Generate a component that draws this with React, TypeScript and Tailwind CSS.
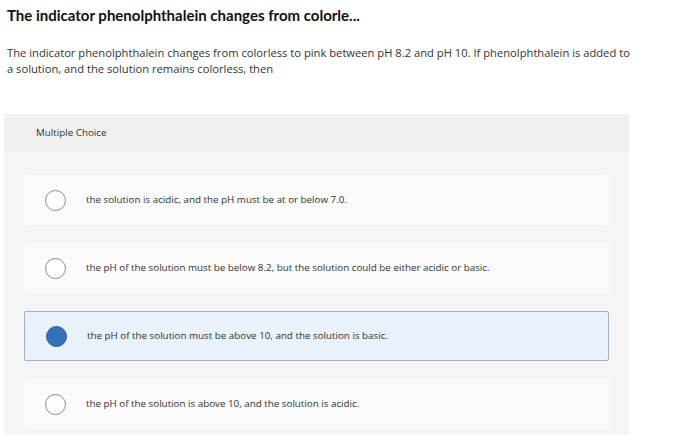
import React from 'react';

const options = [
  { text: 'the solution is acidic, and the pH must be at or below 7.0.', selected: false },
  { text: 'the pH of the solution must be below 8.2, but the solution could be either acidic or basic.', selected: false },
  { text: 'the pH of the solution must be above 10, and the solution is basic.', selected: true },
  { text: 'the pH of the solution is above 10, and the solution is acidic.', selected: false },
];

function Option({ text, selected }: { text: string; selected: boolean }) {
  return (
    <div
      className={`flex h-[50px] items-center rounded-[2px] ${
        selected ? 'border border-[#9fb0c4] bg-[#e9f1fa]' : 'bg-[#fafafa]'
      }`}
    >
      <div className="flex w-[62px] shrink-0 justify-center">
        {selected ? (
          <span className="h-[21px] w-[21px] rounded-full border border-[#2a5f9e] bg-[#3572bb]" />
        ) : (
          <span className="h-[21px] w-[21px] rounded-full border-[1.5px] border-[#7e8a9b] bg-white" />
        )}
      </div>
      <span className="text-[9.8px] font-medium text-[#333]">{text}</span>
    </div>
  );
}

export default function App() {
  return (
    <div className="h-[438px] w-[700px] bg-white font-['Open_Sans',sans-serif] text-[#222]">
      <h1 className="pl-[7px] pt-[5px] font-['Lato',sans-serif] text-[15px] font-bold leading-[20px] text-[#111]">
        The indicator phenolphthalein changes from colorle...
      </h1>
      <p className="mt-[20px] w-[631px] pl-[7px] text-[11.2px] leading-[16px] text-[#333]">
        The indicator phenolphthalein changes from colorless to pink between pH 8.2 and pH 10. If phenolphthalein is added to a solution, and the solution remains colorless, then
      </p>
      <div className="ml-[4px] mt-[37px] w-[625px] bg-[#f5f5f5] pb-[6px]">
        <div className="flex h-[38px] items-center bg-[#f0f0f0] pl-[32px] text-[9.8px] font-medium text-[#333]">
          Multiple Choice
        </div>
        <div className="flex flex-col gap-[18px] px-[20px] pt-[23px]">
          {options.map((o, i) => (
            <Option key={i} text={o.text} selected={o.selected} />
          ))}
        </div>
      </div>
    </div>
  );
}
